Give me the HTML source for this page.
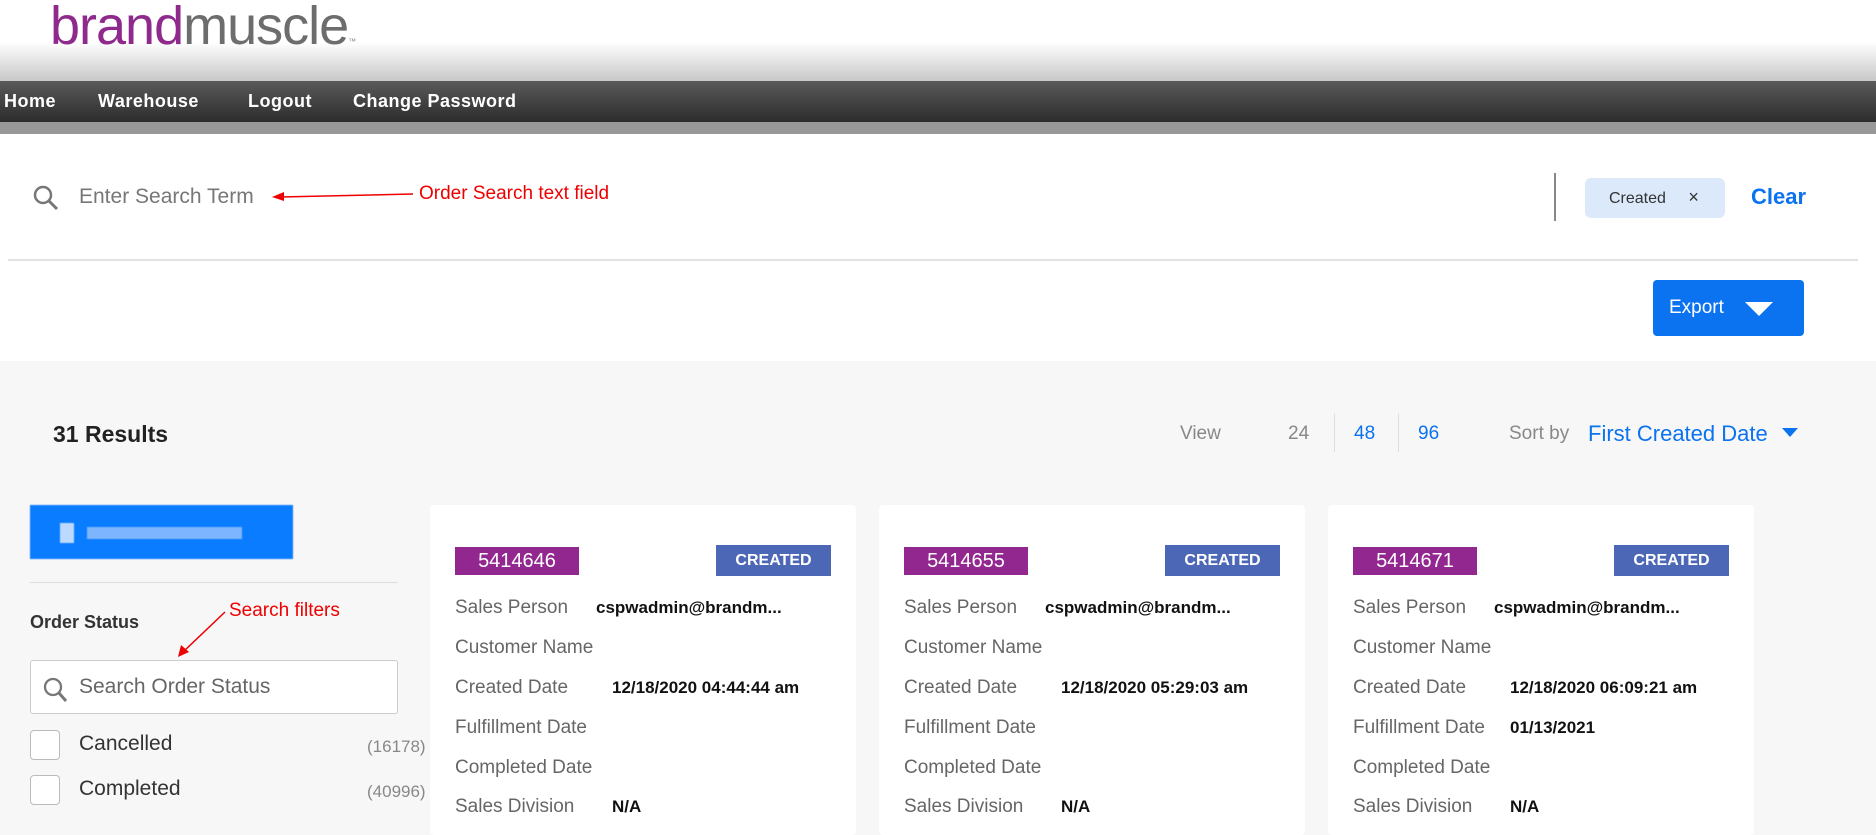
<!DOCTYPE html>
<html><head><meta charset="utf-8"><style>
*{box-sizing:border-box;margin:0;padding:0}
body{width:1876px;height:813px;overflow:hidden;background:#f7f7f7;font-family:"Liberation Sans",Arial,sans-serif;position:relative}
.a{position:absolute;white-space:nowrap}
#hdr{position:absolute;left:0;top:0;width:1876px;height:81px;background:linear-gradient(#fff 0,#fff 42px,#c8c8c8 81px)}
#nav{position:absolute;left:0;top:81px;width:1876px;height:41px;background:linear-gradient(#5a5a5a,#2c2c2c)}
#nav span{position:absolute;top:10px;color:#fff;font-weight:bold;font-size:18px;letter-spacing:0.5px}
#strip{position:absolute;left:0;top:122px;width:1876px;height:12px;background:#989898}
#white{position:absolute;left:0;top:134px;width:1876px;height:227px;background:#fff}
.lbl{color:#666;font-size:19px}
.val{color:#111;font-size:17px;font-weight:bold}
.card{position:absolute;top:505px;width:426px;height:330px;background:#fff;border-radius:4px}
.oid{position:absolute;left:25px;top:42px;width:124px;height:28px;background:#92278f;color:#fff;font-size:20px;text-align:center;line-height:28px}
.st{position:absolute;left:286px;top:40px;width:115px;height:31px;background:#4d67b7;color:#fff;font-size:16px;font-weight:bold;text-align:center;line-height:31px}
.row{position:absolute;left:25px}
</style></head><body>
<div id="hdr"></div>
<div class="a" style="left:50px;top:-4px;font-size:54px;letter-spacing:-1px;line-height:60px"><span style="color:#8f2a8c">brand</span><span style="color:#6d6d6d">muscle</span><span style="font-size:8px;color:#888">™</span></div>
<div id="nav"><span style="left:4px">Home</span><span style="left:98px">Warehouse</span><span style="left:248px">Logout</span><span style="left:353px">Change Password</span></div>
<div id="strip"></div>
<div id="white"></div>
<svg class="a" style="left:32px;top:184px" width="28" height="28" viewBox="0 0 28 28"><circle cx="11" cy="11" r="8" fill="none" stroke="#777" stroke-width="2.5"/><line x1="17" y1="17" x2="25" y2="25" stroke="#777" stroke-width="3"/></svg>
<div class="a" style="left:79px;top:185px;font-size:21px;color:#777">Enter Search Term</div>
<svg class="a" style="left:270px;top:188px" width="150" height="14"><line x1="10" y1="9" x2="143" y2="6" stroke="#e00" stroke-width="1.5"/><polygon points="2,9 14,4 14,13" fill="#e00"/></svg>
<div class="a" style="left:419px;top:183px;font-size:19px;color:#e00">Order Search text field</div>
<div class="a" style="left:1554px;top:173px;width:2px;height:48px;background:#888"></div>
<div class="a" style="left:1585px;top:178px;width:140px;height:40px;background:#dbe9fb;border-radius:6px;font-size:16px;color:#333;line-height:38px;padding-left:24px">Created <span style="margin-left:18px;font-size:18px">×</span></div>
<div class="a" style="left:1751px;top:184px;font-size:22px;color:#0b72f0;font-weight:bold">Clear</div>
<div class="a" style="left:8px;top:259px;width:1850px;height:2px;background:#e2e2e2"></div>
<div class="a" style="left:1653px;top:280px;width:151px;height:56px;background:#0b72f0;border-radius:4px;color:#fff;font-size:19px;line-height:56px;padding-left:16px">Export<svg style="position:absolute;left:92px;top:22px" width="28" height="14"><polygon points="0,0 28,0 14,14" fill="#fff"/></svg></div>
<div class="a" style="left:53px;top:421px;font-size:23px;color:#222;font-weight:bold">31 Results</div>
<div class="a" style="left:1180px;top:423px;font-size:19px;color:#888">View</div>
<div class="a" style="left:1288px;top:423px;font-size:19px;color:#888">24</div>
<div class="a" style="left:1334px;top:414px;width:1px;height:38px;background:#ddd"></div>
<div class="a" style="left:1354px;top:423px;font-size:19px;color:#0b72f0">48</div>
<div class="a" style="left:1398px;top:414px;width:1px;height:38px;background:#ddd"></div>
<div class="a" style="left:1418px;top:423px;font-size:19px;color:#0b72f0">96</div>
<div class="a" style="left:1509px;top:423px;font-size:19px;color:#888">Sort by</div>
<div class="a" style="left:1588px;top:421px;font-size:22px;color:#0b72f0">First Created Date</div>
<svg class="a" style="left:1782px;top:428px" width="16" height="9"><polygon points="0,0 16,0 8,9" fill="#0b72f0"/></svg>
<div class="a" style="left:30px;top:505px;width:263px;height:54px;background:#0a7cff;filter:blur(0.5px)"><div style="position:absolute;left:30px;top:18px;width:14px;height:20px;background:#bcd9ff"></div><div style="position:absolute;left:57px;top:22px;width:155px;height:12px;background:#7db6ff"></div></div>
<div class="a" style="left:30px;top:582px;width:368px;height:1px;background:#ddd"></div>
<div class="a" style="left:30px;top:612px;font-size:18px;color:#333;font-weight:bold">Order Status</div>
<div class="a" style="left:229px;top:600px;font-size:19px;color:#e00">Search filters</div>
<svg class="a" style="left:175px;top:610px" width="55" height="50"><line x1="50" y1="2" x2="8" y2="42" stroke="#e00" stroke-width="1.5"/><polygon points="3,47 6,35 14,42" fill="#e00"/></svg>
<div class="a" style="left:30px;top:660px;width:368px;height:54px;background:#fff;border:1px solid #ccc;border-radius:3px"></div>
<svg class="a" style="left:42px;top:676px" width="26" height="28"><circle cx="11" cy="11" r="8" fill="none" stroke="#777" stroke-width="2.3"/><line x1="17" y1="17" x2="24" y2="25" stroke="#777" stroke-width="3"/></svg>
<div class="a" style="left:79px;top:675px;font-size:21px;color:#666">Search Order Status</div>
<div class="a" style="left:30px;top:730px;width:30px;height:30px;border:1px solid #bbb;border-radius:4px;background:#fff"></div>
<div class="a" style="left:79px;top:732px;font-size:21px;color:#333">Cancelled</div>
<div class="a" style="left:367px;top:737px;font-size:17px;color:#888">(16178)</div>
<div class="a" style="left:30px;top:775px;width:30px;height:30px;border:1px solid #bbb;border-radius:4px;background:#fff"></div>
<div class="a" style="left:79px;top:777px;font-size:21px;color:#333">Completed</div>
<div class="a" style="left:367px;top:782px;font-size:17px;color:#888">(40996)</div>

<div class="card" style="left:430px"><div class="oid">5414646</div><div class="st">CREATED</div>
<div class="row lbl" style="top:92px">Sales Person</div><div class="row val" style="left:166px;top:93px">cspwadmin@brandm...</div>
<div class="row lbl" style="top:132px">Customer Name</div>
<div class="row lbl" style="top:172px">Created Date</div><div class="row val" style="left:182px;top:173px">12/18/2020 04:44:44 am</div>
<div class="row lbl" style="top:212px">Fulfillment Date</div>
<div class="row lbl" style="top:252px">Completed Date</div>
<div class="row lbl" style="top:291px">Sales Division</div><div class="row val" style="left:182px;top:292px">N/A</div></div>

<div class="card" style="left:879px"><div class="oid">5414655</div><div class="st">CREATED</div>
<div class="row lbl" style="top:92px">Sales Person</div><div class="row val" style="left:166px;top:93px">cspwadmin@brandm...</div>
<div class="row lbl" style="top:132px">Customer Name</div>
<div class="row lbl" style="top:172px">Created Date</div><div class="row val" style="left:182px;top:173px">12/18/2020 05:29:03 am</div>
<div class="row lbl" style="top:212px">Fulfillment Date</div>
<div class="row lbl" style="top:252px">Completed Date</div>
<div class="row lbl" style="top:291px">Sales Division</div><div class="row val" style="left:182px;top:292px">N/A</div></div>

<div class="card" style="left:1328px"><div class="oid">5414671</div><div class="st">CREATED</div>
<div class="row lbl" style="top:92px">Sales Person</div><div class="row val" style="left:166px;top:93px">cspwadmin@brandm...</div>
<div class="row lbl" style="top:132px">Customer Name</div>
<div class="row lbl" style="top:172px">Created Date</div><div class="row val" style="left:182px;top:173px">12/18/2020 06:09:21 am</div>
<div class="row lbl" style="top:212px">Fulfillment Date</div><div class="row val" style="left:182px;top:213px">01/13/2021</div>
<div class="row lbl" style="top:252px">Completed Date</div>
<div class="row lbl" style="top:291px">Sales Division</div><div class="row val" style="left:182px;top:292px">N/A</div></div>
</body></html>
